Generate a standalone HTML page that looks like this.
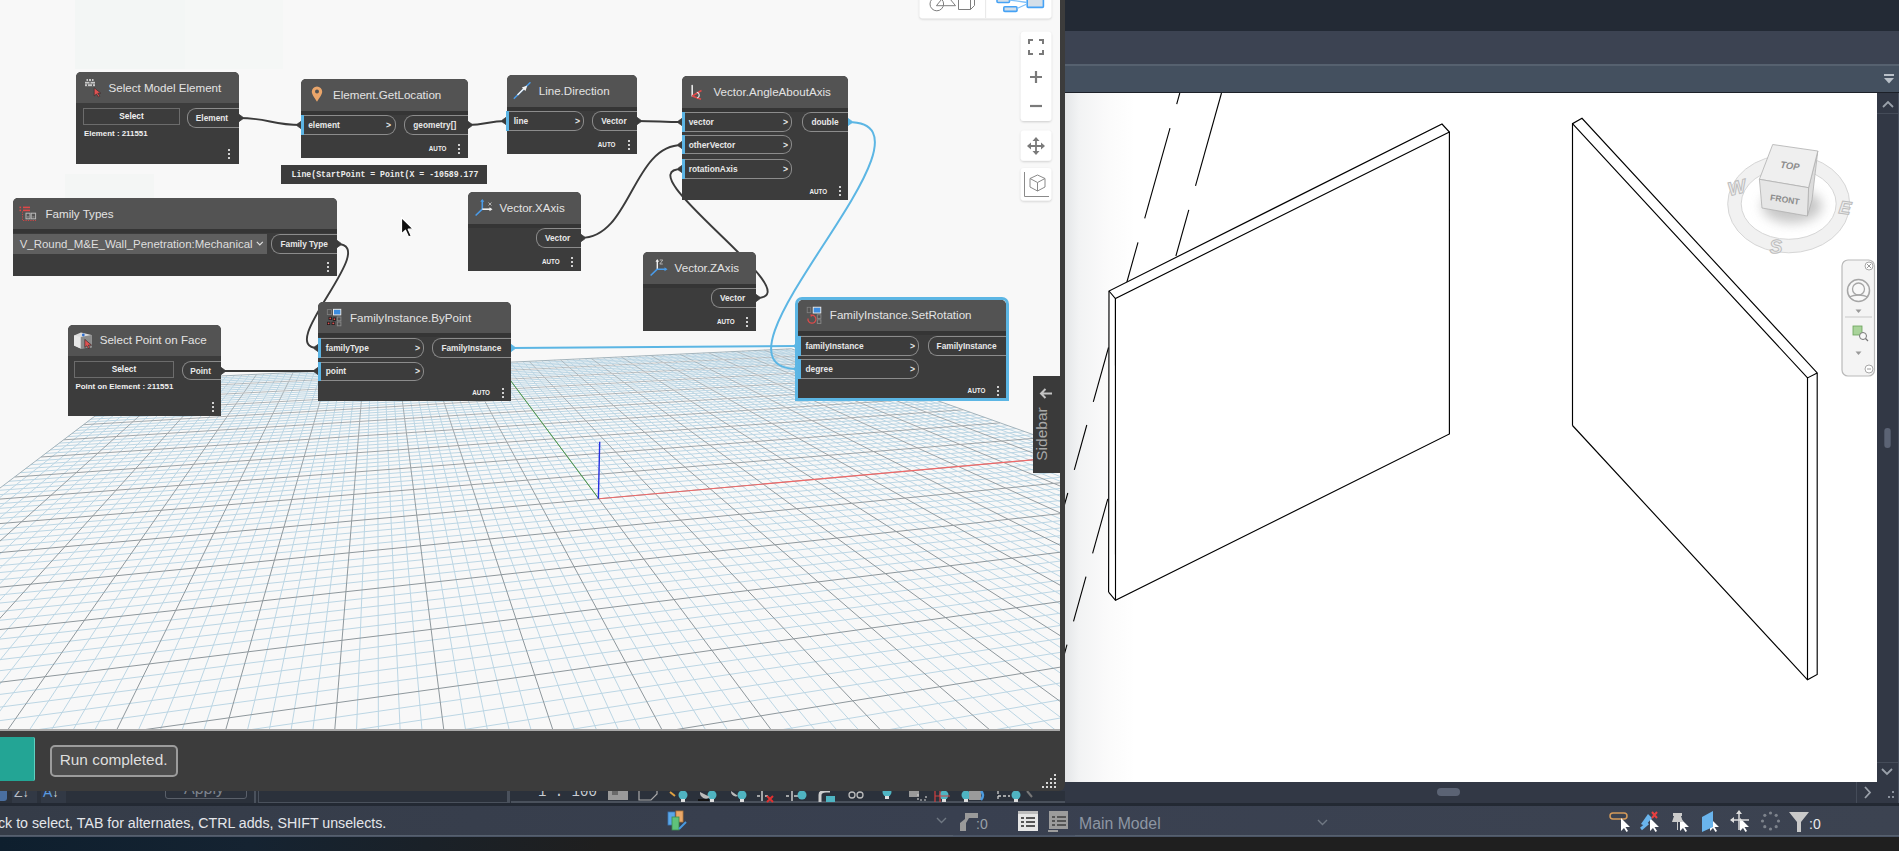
<!DOCTYPE html><html><head><meta charset="utf-8"><style>
*{box-sizing:border-box;margin:0;padding:0}
html,body{width:1899px;height:851px;overflow:hidden;background:#1e1e1e;font-family:"Liberation Sans", sans-serif}
.abs{position:absolute}
</style></head><body>

<div class="abs" style="left:1065px;top:0;width:834px;height:31px;background:#232a35"></div>
<div class="abs" style="left:1065px;top:31px;width:834px;height:33px;background:#3c4352"></div>
<div class="abs" style="left:1065px;top:64px;width:834px;height:28px;background:#44505f;border-top:2px solid #56616f"></div>
<div class="abs" style="left:1065px;top:92px;width:834px;height:1px;background:#1c2028"></div>
<div class="abs" style="left:1876px;top:93px;width:23px;height:689px;background:#323845"></div>
<div class="abs" style="left:0;top:782px;width:1899px;height:21px;background:#323845"></div>
<div class="abs" style="left:0;top:803px;width:1899px;height:3px;background:#232933"></div>
<div class="abs" style="left:0;top:806px;width:1899px;height:30px;background:linear-gradient(90deg,#353c48,#394050 50%,#3c4351)"></div>
<div class="abs" style="left:0;top:835px;width:1899px;height:2px;background:#4b5566"></div>
<div class="abs" style="left:0;top:837px;width:1899px;height:14px;background:#1f1f1f"></div>
<div class="abs" style="left:1065px;top:93px;width:812px;height:689px;background:linear-gradient(90deg,#e4e6e8 0px,#f2f3f4 14px,#fafafa 40px,#fff 70px)"></div><svg class="abs" style="left:0;top:0" width="1899" height="851"><path d="M1179.8 93L1176.7 104.1" stroke="#000" stroke-width="1.1" fill="none"/><path d="M1170.0 128.1L1144.7 218.4" stroke="#000" stroke-width="1.1" fill="none"/><path d="M1138.0 242.3L1126.9 282" stroke="#000" stroke-width="1.1" fill="none"/><path d="M1108.5 347.5L1093.3 401.8" stroke="#000" stroke-width="1.1" fill="none"/><path d="M1086.8 425L1074.3 469.8" stroke="#000" stroke-width="1.1" fill="none"/><path d="M1067.8 493L1063.0 510" stroke="#000" stroke-width="1.1" fill="none"/><path d="M1221.5 93L1195.5 185.9" stroke="#000" stroke-width="1.1" fill="none"/><path d="M1188.8 209.9L1175.9 256" stroke="#000" stroke-width="1.1" fill="none"/><path d="M1107.8 498.9L1092.6 553.3" stroke="#000" stroke-width="1.1" fill="none"/><path d="M1086.0 576.6L1073.5 621.3" stroke="#000" stroke-width="1.1" fill="none"/><path d="M1067.0 644.6L1061.3 665" stroke="#000" stroke-width="1.1" fill="none"/><polygon points="1109,291 1442,124 1449.4,132 1449.4,434 1115.5,600.3 1108.6,592.1" fill="#fff" stroke="none"/><polyline points="1108.6,592.1 1109,291 1442,124 1449.4,132 1449.4,434 1115.5,600.3 1108.6,592.1" stroke="#000" stroke-width="1.15" fill="none"/><polyline points="1109,291 1115.4,298.5 1449.4,132" stroke="#000" stroke-width="1.15" fill="none"/><polyline points="1115.4,298.5 1115.5,600.3" stroke="#000" stroke-width="1.15" fill="none"/><polyline points="1572.5,425.5 1572.5,123.7 1582,118.3 1817.2,372.9 1817.2,674.4 1807.5,679.8 1572.5,425.5" stroke="#000" stroke-width="1.15" fill="none"/><polyline points="1572.5,123.7 1807.5,377.9 1817.2,372.9" stroke="#000" stroke-width="1.15" fill="none"/><polyline points="1807.5,377.9 1807.5,679.8" stroke="#000" stroke-width="1.15" fill="none"/></svg>
<svg class="abs" style="left:0;top:0" width="1899" height="851"><defs><filter id="blr" x="-50%" y="-50%" width="200%" height="200%"><feGaussianBlur stdDeviation="6"/></filter></defs><path fill-rule="evenodd" d="M1727.7 203.8A61 49 0 1 0 1849.7 203.8A61 49 0 1 0 1727.7 203.8ZM1741.2 203.8A47.5 35.5 0 1 0 1836.2 203.8A47.5 35.5 0 1 0 1741.2 203.8Z" fill="#f1f1f1" stroke="#d6d6d6" stroke-width="1"/><ellipse cx="1792" cy="206" rx="30" ry="17" fill="#9a9a9a" opacity="0.55" filter="url(#blr)"/><polygon points="1817.8,151 1808.6,187.7 1807.4,216 1812,200" fill="#dcdcdc" stroke="#b0b0b0" stroke-width="0.8"/><polygon points="1772.7,144.5 1817.8,151 1808.6,187.7 1759.4,179.3" fill="#efefef" stroke="#b0b0b0" stroke-width="0.8"/><polygon points="1759.4,179.3 1808.6,187.7 1807.4,216 1762,208" fill="#e6e6e6" stroke="#b0b0b0" stroke-width="0.8"/><text x="1790" y="169" font-size="9.5" text-anchor="middle" fill="#8c8c8c" style="font-family:'Liberation Sans';font-weight:bold;font-style:italic" transform="rotate(7 1790 165)">TOP</text><text x="1785" y="202.5" font-size="8.6" text-anchor="middle" fill="#8c8c8c" style="font-family:'Liberation Sans';font-weight:bold" transform="rotate(9 1785 199)">FRONT</text><text x="1737" y="194" font-size="19" text-anchor="middle" fill="#eeeeee" stroke="#bdbdbd" stroke-width="1" style="font-family:'Liberation Sans';font-weight:bold;font-style:italic" transform="rotate(-14 1737 188)">W</text><text x="1845" y="214" font-size="18" text-anchor="middle" fill="#eeeeee" stroke="#bdbdbd" stroke-width="1" style="font-family:'Liberation Sans';font-weight:bold;font-style:italic" transform="rotate(8 1845 208)">E</text><text x="1776" y="253" font-size="19" text-anchor="middle" fill="#eeeeee" stroke="#bdbdbd" stroke-width="1" style="font-family:'Liberation Sans';font-weight:bold;font-style:italic" transform="rotate(-4 1776 247)">S</text><rect x="1842" y="260" width="32.5" height="116" rx="6" fill="#f4f4f4" stroke="#b9b9b9" stroke-width="1.2"/><circle cx="1869" cy="266" r="4" fill="#fff" stroke="#a8a8a8" stroke-width="1"/><path d="M1867 264L1871 268M1871 264L1867 268" stroke="#999" stroke-width="1"/><circle cx="1858.5" cy="290.5" r="11" fill="#f8f8f8" stroke="#a6a6a6" stroke-width="1.5"/><circle cx="1858.5" cy="289" r="6" fill="none" stroke="#a6a6a6" stroke-width="1.3"/><path d="M1849 297Q1858.5 293 1868 297" stroke="#a6a6a6" stroke-width="1.3" fill="none"/><path d="M1855.5 309.5L1861.5 309.5L1858.5 313Z" fill="#9a9a9a"/><path d="M1845 317H1872" stroke="#c8c8c8" stroke-width="1"/><rect x="1853" y="326" width="9" height="9" fill="#a9d39a" stroke="#6aa35a" stroke-width="0.8"/><circle cx="1863" cy="336" r="3.5" fill="#f8f8f8" stroke="#777" stroke-width="1"/><path d="M1865.5 338.5L1868 341" stroke="#777" stroke-width="1.3"/><path d="M1855.5 351.5L1861.5 351.5L1858.5 355Z" fill="#9a9a9a"/><circle cx="1869" cy="369" r="4" fill="#fff" stroke="#a8a8a8" stroke-width="1"/><path d="M1867 369H1871" stroke="#999" stroke-width="1"/></svg>
<svg class="abs" style="left:0;top:0" width="1899" height="851"><rect x="1884" y="74" width="10" height="2" fill="#b9c0c8"/><path d="M1884 78H1894L1889 83.5Z" fill="#b9c0c8"/><path d="M1883 107L1888 102L1893 107" stroke="#9aa1aa" stroke-width="1.8" fill="none"/><rect x="1877" y="113" width="21" height="1" fill="#454c59"/><rect x="1884.3" y="428" width="6.4" height="20" rx="3" fill="#5b6374"/><rect x="1877" y="762" width="21" height="1" fill="#454c59"/><path d="M1882 769L1887 774L1892 769" stroke="#9aa1aa" stroke-width="1.8" fill="none"/><rect x="1898" y="93" width="1" height="710" fill="#4a5260"/><rect x="1437" y="788" width="23" height="8" rx="4" fill="#5b6374"/><rect x="1856" y="782" width="1" height="21" fill="#454c59"/><path d="M1865 787L1870 792.5L1865 798" stroke="#9aa1aa" stroke-width="1.8" fill="none"/><rect x="1892" y="791" width="2" height="2" fill="#8a919c"/><rect x="1888" y="796" width="2" height="2" fill="#8a919c"/><rect x="1892" y="796" width="2" height="2" fill="#8a919c"/></svg>
<div class="abs" style="left:0;top:791px;width:1065px;height:12px;background:#2b313b"></div><div class="abs" style="left:0;top:791px;width:7px;height:10px;background:#4a6fa0;border-radius:0 0 3px 0"></div><div class="abs" style="left:12px;top:791px;width:25px;height:12px;background:#323945"></div><div class="abs" style="left:41px;top:791px;width:25px;height:12px;background:#323945"></div><div class="abs" style="left:14px;top:785px;font-size:14px;line-height:1;color:#b9bec6">Z<span style="font-size:12px;font-weight:bold;color:#ddd">&#8595;</span></div><div class="abs" style="left:43px;top:785px;font-size:14px;line-height:1;color:#5a9ae0">A<span style="font-size:12px;font-weight:bold;color:#ddd">&#8595;</span></div><div class="abs" style="left:165px;top:780px;width:82px;height:19px;border:1px solid #5a606a;border-radius:3px"></div><div class="abs" style="left:184px;top:780.5px;font-size:16px;line-height:1;color:#7d838c">Apply</div><div class="abs" style="left:254px;top:791px;width:2px;height:12px;background:#4a515c"></div><div class="abs" style="left:258px;top:791px;width:250px;height:12px;border:1px solid #4a515c;border-top:none"></div><div class="abs" style="left:507px;top:791px;width:3px;height:12px;background:#4a515c"></div><div class="abs" style="left:511px;top:791px;width:554px;height:12px;border-bottom:2px solid #4a515c"></div><div class="abs" style="left:538px;top:784.7px;font-size:14px;line-height:1;color:#c9cdd3;font-family:'Liberation Mono',monospace">1 : 100</div><svg class="abs" style="left:0;top:0" width="1899" height="851"><rect x="608" y="791" width="20" height="9" fill="#9a9a9a"/><rect x="612" y="791" width="6" height="4" fill="#6a6a6a"/><path d="M639 791V800H651L657 794V791" stroke="#aaa" stroke-width="1.2" fill="none"/><circle cx="683" cy="795" r="4.5" fill="#4fb4c2"/><rect x="681" y="799" width="4" height="3" fill="#ddd"/><circle cx="712" cy="795" r="4.5" fill="#4fb4c2"/><rect x="710" y="799" width="4" height="3" fill="#ddd"/><circle cx="742" cy="795" r="4.5" fill="#4fb4c2"/><rect x="740" y="799" width="4" height="3" fill="#ddd"/><circle cx="944" cy="795" r="4.5" fill="#4fb4c2"/><rect x="942" y="799" width="4" height="3" fill="#ddd"/><circle cx="966" cy="795" r="4.5" fill="#4fb4c2"/><rect x="964" y="799" width="4" height="3" fill="#ddd"/><circle cx="1016" cy="795" r="4.5" fill="#4fb4c2"/><rect x="1014" y="799" width="4" height="3" fill="#ddd"/><path d="M670 792L675 796" stroke="#e0a040" stroke-width="2"/><path d="M700 792A6 6 0 0 0 710 797" fill="#bbb"/><rect x="698" y="799" width="11" height="2" fill="#111"/><path d="M731 791A5 5 0 0 0 738 796" fill="#bbb"/><path d="M762 791V801M757 796H760M765 796H768" stroke="#ccc" stroke-width="1.5"/><path d="M767 796L773 802M773 796L767 802" stroke="#e03030" stroke-width="2"/><path d="M792 791V801M786 796H789M794 796H798" stroke="#ccc" stroke-width="1.5"/><circle cx="802" cy="795" r="4.5" fill="#4fb4c2"/><path d="M820 802V795Q820 791 826 791H830" stroke="#ccc" stroke-width="3" fill="none"/><rect x="826" y="796" width="9" height="6" fill="#4fb4c2"/><circle cx="852" cy="795" r="3" stroke="#bbb" stroke-width="1.3" fill="none"/><circle cx="860" cy="795" r="3" stroke="#bbb" stroke-width="1.3" fill="none"/><circle cx="887" cy="792" r="4.5" fill="#4fb4c2"/><rect x="885" y="796" width="4" height="3" fill="#ddd"/><rect x="909" y="791" width="10" height="6" fill="#9a9a9a"/><path d="M918 794V800H926V794" stroke="#ccc" stroke-width="1.2" fill="none" stroke-dasharray="2 2"/><path d="M935 791V802M940 791V802M935 796H950" stroke="#d04040" stroke-width="1.2"/><rect x="969" y="791" width="12" height="9" fill="#9a9a9a"/><path d="M981 791Q985 795 981 800" stroke="#4a9ae0" stroke-width="2.5" fill="none"/><path d="M998 791V800M998 796H1010" stroke="#ccc" stroke-width="1.3" stroke-dasharray="3 2"/><path d="M1027 791L1032 797" stroke="#777" stroke-width="2"/></svg><div class="abs" style="left:-2px;top:815.5px;font-size:14.22px;line-height:1;color:#e4e6ea;white-space:nowrap">ck to select, TAB for alternates, CTRL adds, SHIFT unselects.</div><svg class="abs" style="left:0;top:0" width="1899" height="851"><rect x="668" y="812" width="7" height="13" fill="#5aa7e8" stroke="#3a78b8" stroke-width="0.8"/><rect x="676" y="811" width="7" height="11" fill="#e9a86a" stroke="#b87838" stroke-width="0.8"/><rect x="672" y="817" width="7" height="13" fill="#5fc27a" stroke="#3a8a50" stroke-width="0.8"/><path d="M679 829L686 822" stroke="#4a9ae0" stroke-width="2"/><path d="M937 818L941.5 822.5L946 818" stroke="#6f7782" stroke-width="1.4" fill="none"/><path d="M960 831V823L965 819V813H978V818H969L966 823V831Z" fill="#9a9a9a"/><rect x="1018" y="811" width="20" height="20" fill="#e6e6e6"/><rect x="1018" y="811" width="20" height="3" fill="#bdbdbd"/><g fill="#555"><rect x="1021" y="817" width="3" height="2"/><rect x="1026" y="817" width="9" height="2"/><rect x="1021" y="821" width="3" height="2"/><rect x="1026" y="821" width="9" height="2"/><rect x="1021" y="825" width="3" height="2"/><rect x="1026" y="825" width="9" height="2"/></g><rect x="1049" y="811" width="19" height="18" fill="#9c9c9c"/><g fill="#555"><rect x="1052" y="816" width="3" height="2"/><rect x="1057" y="816" width="9" height="2"/><rect x="1052" y="820" width="3" height="2"/><rect x="1057" y="820" width="9" height="2"/><rect x="1052" y="824" width="3" height="2"/><rect x="1057" y="824" width="9" height="2"/></g><path d="M1048 831H1058" stroke="#9c9c9c" stroke-width="2"/><rect x="0" y="835" width="953" height="1" fill="#56606e"/><rect x="1075" y="835" width="824" height="1" fill="#56606e"/><path d="M1318 820L1322.5 824.5L1327 820" stroke="#6f7782" stroke-width="1.4" fill="none"/><path d="M1613 813H1624A3 3 0 0 1 1624 819H1613A3 3 0 0 1 1613 813Z" stroke="#d49a5a" stroke-width="1.5" fill="none"/><path d="M1621 818V831L1624 828L1626.5 832L1628 831L1625.5 827H1630Z" fill="#fff"/><path d="M1650 818V831L1653 828L1655.5 832L1657 831L1654.5 827H1659Z" fill="#fff"/><path d="M1680 818V831L1683 828L1685.5 832L1687 831L1684.5 827H1689Z" fill="#fff"/><path d="M1710 818V831L1713 828L1715.5 832L1717 831L1714.5 827H1719Z" fill="#fff"/><path d="M1740 818V831L1743 828L1745.5 832L1747 831L1744.5 827H1749Z" fill="#fff"/><path d="M1641 824L1648 814L1652 818L1645 826Z" fill="#6ab4ec"/><path d="M1641 829L1648 823" stroke="#6ab4ec" stroke-width="3"/><path d="M1652 812L1657 818M1657 812L1652 818" stroke="#e84040" stroke-width="2"/><rect x="1673" y="813" width="9" height="3" fill="#ccc"/><path d="M1674 816H1681L1683 822H1672Z" fill="#ccc"/><path d="M1677.5 822V830" stroke="#ccc" stroke-width="1"/><path d="M1702 817L1713 811V827L1702 832Z" fill="#6ab4ec"/><path d="M1739 811V830M1731 820H1749" stroke="#ddd" stroke-width="1.5"/><path d="M1739 810L1742 814H1736Z M1730 820L1734 817V823Z" fill="#ddd"/><circle cx="1778.5" cy="821.0" r="1.6" fill="#7d838c"/><circle cx="1776.2" cy="826.7" r="1.6" fill="#7d838c"/><circle cx="1770.5" cy="829.0" r="1.6" fill="#7d838c"/><circle cx="1764.8" cy="826.7" r="1.6" fill="#7d838c"/><circle cx="1762.5" cy="821.0" r="1.6" fill="#7d838c"/><circle cx="1764.8" cy="815.3" r="1.6" fill="#7d838c"/><circle cx="1770.5" cy="813.0" r="1.6" fill="#7d838c"/><circle cx="1776.2" cy="815.3" r="1.6" fill="#7d838c"/><path d="M1789 812H1809L1801 822V832H1797V822Z" fill="#c9c9c9"/></svg><div class="abs" style="left:1809px;top:816.5px;font-size:14px;line-height:1;color:#e8eaee">:0</div><div class="abs" style="left:976px;top:816.5px;font-size:14px;line-height:1;color:#9aa0a8">:0</div><div class="abs" style="left:1079px;top:815.5px;font-size:15.8px;line-height:1;color:#8d96a3;white-space:nowrap">Main Model</div><div class="abs" style="left:0;top:837px;width:1899px;height:14px;background:linear-gradient(90deg,#0e1f2e 0px,#152331 250px,#1f1f1f 600px,#1f1f1f 100%)"></div>
<div class="abs" style="left:0;top:0;width:1065px;height:791px;background:#3c3c3c;border-bottom-right-radius:6px"></div>
<div class="abs" style="left:0;top:0;width:1060px;height:730px;background:#f8f8f8;overflow:hidden" id="canvas">
<div class="abs" style="left:74.7px;top:0;width:110px;height:69px;background:#f3f6f5"></div><div class="abs" style="left:184.7px;top:0;width:98px;height:69px;background:#f5f7f6"></div><div class="abs" style="left:65.3px;top:174.4px;width:88.4px;height:24px;background:#f4f6f5"></div>
<svg class="abs" style="left:0;top:0" width="1060" height="730"><defs><linearGradient id="gfade" x1="0" y1="0" x2="0" y2="1" gradientUnits="objectBoundingBox"><stop offset="0" stop-color="#fff" stop-opacity="0.45"/><stop offset="0.5" stop-color="#fff" stop-opacity="0.85"/><stop offset="1" stop-color="#fff" stop-opacity="1"/></linearGradient><mask id="gmask" maskUnits="userSpaceOnUse" x="0" y="0" width="1060" height="730"><rect x="0" y="340" width="1060" height="200" fill="url(#gfade)"/><rect x="0" y="540" width="1060" height="190" fill="#fff"/></mask></defs><path d="M-2067.4 2115.5L150.7 379.4M-1937.1 2074.0L158.5 379.0M-1812.4 2034.2L166.2 378.6M-1692.9 1996.0L173.9 378.3M-1468.1 1924.3L189.3 377.5M-1362.3 1890.6L196.9 377.2M-1260.5 1858.1L204.5 376.8M-1162.6 1826.9L212.0 376.4M-977.4 1767.8L227.0 375.7M-1945.3 1963.1L2004.6 779.3M-889.8 1739.9L234.5 375.4M-1734.0 1802.9L1952.8 760.9M-805.2 1712.9L241.9 375.0M-1557.9 1669.4L1904.1 743.6M-723.6 1686.9L249.3 374.7M-1409.0 1556.4L1858.4 727.4M-568.4 1637.4L264.0 374.0M-1170.7 1375.8L1774.6 697.7M-494.6 1613.8L271.4 373.6M-1073.9 1302.4L1736.2 684.1M-423.2 1591.1L278.6 373.3M-988.5 1237.6L1699.8 671.2M-354.1 1569.0L285.9 372.9M-912.6 1180.0L1665.4 658.9M-222.2 1526.9L300.3 372.2M-783.5 1082.2L1601.6 636.3M-159.2 1506.8L307.5 371.9M-728.2 1040.3L1572.0 625.8M-98.1 1487.4L314.6 371.6M-677.9 1002.1L1543.8 615.8M-38.8 1468.4L321.8 371.2M-632.0 967.3L1516.9 606.2M74.7 1432.2L335.9 370.5M-551.3 906.1L1466.6 588.4M129.1 1414.9L342.9 370.2M-515.5 879.0L1443.2 580.1M181.9 1398.0L349.9 369.9M-482.5 853.9L1420.7 572.1M233.3 1381.6L356.9 369.5M-451.7 830.6L1399.1 564.5M332.0 1350.1L370.8 368.9M-396.5 788.7L1358.5 550.1M379.5 1335.0L377.7 368.6M-371.5 769.8L1339.4 543.3M425.6 1320.3L384.5 368.2M-348.1 752.0L1321.0 536.8M470.6 1305.9L391.4 367.9M-326.1 735.4L1303.4 530.5M557.3 1278.3L405.0 367.3M-285.9 704.9L1269.9 518.6M599.0 1265.0L411.8 366.9M-267.5 690.9L1254.1 513.0M639.7 1252.0L418.5 366.6M-250.0 677.7L1238.8 507.6M679.4 1239.3L425.2 366.3M-233.5 665.2L1224.0 502.4M756.0 1214.9L438.6 365.7M-203.0 642.0L1196.0 492.4M793.0 1203.1L445.2 365.3M-188.8 631.3L1182.7 487.7M829.2 1191.6L451.8 365.0M-175.3 621.0L1169.7 483.1M864.5 1180.3L458.4 364.7M-162.5 611.3L1157.2 478.7M932.8 1158.5L471.5 364.1M-138.5 593.1L1133.4 470.2M965.8 1148.0L478.0 363.8M-127.3 584.6L1122.0 466.1M998.1 1137.7L484.5 363.5M-116.5 576.5L1110.9 462.2M1029.7 1127.6L491.0 363.2M-106.2 568.6L1100.2 458.4M1090.9 1108.1L503.8 362.5M-86.9 554.0L1079.7 451.1M1120.6 1098.6L510.2 362.2M-77.8 547.1L1069.8 447.6M1149.6 1089.4L516.6 361.9M-69.0 540.4L1060.3 444.2M1178.1 1080.3L522.9 361.6M-60.6 534.1L1050.9 440.9M1233.3 1062.7L535.5 361.0M-44.7 522.0L1033.1 434.6M1260.0 1054.1L541.8 360.7M-37.1 516.3L1024.5 431.6M1286.3 1045.8L548.1 360.4M-29.9 510.7L1016.1 428.6M1312.0 1037.6L554.3 360.1M-22.8 505.4L1008.0 425.7M1362.1 1021.6L566.7 359.6M-9.5 495.3L992.3 420.1M1386.4 1013.8L572.9 359.3M-3.2 490.5L984.7 417.4M1410.2 1006.2L579.0 359.0M3.0 485.8L977.3 414.8M1433.6 998.8L585.1 358.7M8.9 481.3L970.2 412.3M1479.2 984.2L597.3 358.1M20.3 472.7L956.3 407.3M1501.3 977.2L603.3 357.8M25.7 468.6L949.6 405.0M1523.1 970.2L609.4 357.5M30.9 464.7L943.0 402.6M1544.5 963.4L615.4 357.2M36.0 460.8L936.6 400.4M1586.1 950.1L627.3 356.7M45.8 453.4L924.2 396.0M1606.4 943.7L633.2 356.4M50.4 449.9L918.3 393.9M1626.3 937.3L639.2 356.1M55.0 446.4L912.4 391.8M1645.9 931.0L645.1 355.8M59.4 443.1L906.7 389.8M1684.2 918.9L656.8 355.3M67.9 436.6L895.6 385.8M1702.8 912.9L662.6 355.0M72.0 433.5L890.2 383.9M1721.1 907.1L668.5 354.7M75.9 430.5L884.9 382.0M1739.2 901.3L674.2 354.4M79.8 427.6L879.8 380.2M1774.4 890.1L685.8 353.9M87.2 422.0L869.8 376.7M1791.5 884.6L691.5 353.6M90.8 419.2L864.9 374.9M1808.5 879.2L697.2 353.3M94.3 416.6L860.1 373.2M1825.1 873.9L702.9 353.1M97.7 414.0L855.5 371.6M1857.6 863.5L714.2 352.5M104.3 409.0L846.4 368.4M1873.5 858.5L719.9 352.3M107.5 406.6L842.0 366.8M1889.2 853.5L725.5 352.0M110.6 404.3L837.7 365.3M1904.6 848.5L731.1 351.7M113.6 402.0L833.4 363.8M1934.7 838.9L742.2 351.2M119.5 397.5L825.1 360.8M1949.5 834.2L747.8 350.9M122.3 395.4L821.1 359.4M1964.0 829.6L753.3 350.7M125.1 393.3L817.2 358.0M1978.3 825.0L758.8 350.4M127.8 391.2L813.3 356.6M2006.3 816.1L769.7 349.9M133.0 387.2L805.7 353.9M2020.1 811.7L775.2 349.6M135.6 385.3L802.1 352.6M2033.6 807.4L780.6 349.4M138.1 383.4L798.4 351.4M2046.9 803.1L786.0 349.1M140.5 381.6L794.9 350.1" stroke="#bcd6e4" stroke-width="1" fill="none"/><path d="M-1578.2 1959.5L181.6 377.9M-1068.3 1796.8L219.5 376.1M-2203.6 2158.9L2060.1 799.0M-644.7 1661.7L256.7 374.3M-1281.3 1459.6L1815.3 712.1M-287.1 1547.6L293.1 372.6M-844.6 1128.5L1632.7 647.3M18.8 1450.1L328.8 370.9M-590.0 935.4L1491.2 597.1M283.4 1365.7L363.9 369.2M-423.1 809.0L1378.4 557.1M514.5 1291.9L398.2 367.6M-305.4 719.7L1286.3 524.5M718.2 1227.0L431.9 366.0M-217.8 653.3L1209.8 497.3M899.0 1169.3L465.0 364.4M-150.2 602.0L1145.1 474.4M1060.6 1117.7L497.4 362.9M-96.4 561.2L1089.8 454.7M1205.9 1071.4L529.2 361.3M-52.5 527.9L1041.9 437.7M1337.3 1029.5L560.5 359.8M-16.1 500.3L1000.0 422.9M1456.6 991.4L591.2 358.4M14.7 477.0L963.1 409.8M1565.5 956.7L621.3 356.9M41.0 457.0L930.4 398.2M1665.2 924.9L650.9 355.5M63.7 439.8L901.1 387.8M1756.9 895.7L680.0 354.2M83.6 424.7L874.7 378.4M1841.5 868.7L708.6 352.8M101.0 411.5L850.9 370.0M1919.8 843.7L736.7 351.5M116.6 399.7L829.2 362.3M1992.4 820.5L764.3 350.1M130.4 389.2L809.5 355.3" stroke="#8e979c" stroke-width="1" fill="none" mask="url(#gmask)"/><path d="M-2203.6 2158.9L142.9 379.7M2060.1 799.0L791.4 348.8M142.9 379.7L791.4 348.8" stroke="#a3b3bb" stroke-width="1" fill="none"/><path d="M598.8 498.8L1089.8 454.7" stroke="#f06868" stroke-width="1.1" fill="none"/><path d="M598.8 498.8L497.4 362.9" stroke="#4a9a4a" stroke-width="1" fill="none"/><path d="M598.4 498.8L599.7 441.7" stroke="#2630e0" stroke-width="1.4" fill="none"/></svg>
<svg class="abs" style="left:0;top:0" width="1060" height="730"><path d="M239 118C269 118 271 125 301 125" stroke="#3b3b3b" stroke-width="1.9" fill="none"/><path d="M239 114.4L242.8 117.1V118.9L239 121.6Z" fill="#3b3b3b" stroke="#3b3b3b" stroke-width="0.8" stroke-linejoin="round"/><path d="M301 121.4L297.2 124.1V125.9L301 128.6Z" fill="#3b3b3b" stroke="#3b3b3b" stroke-width="0.8" stroke-linejoin="round"/><path d="M468 125C486 125 488 121 506 121" stroke="#3b3b3b" stroke-width="1.9" fill="none"/><path d="M468 121.4L471.8 124.1V125.9L468 128.6Z" fill="#3b3b3b" stroke="#3b3b3b" stroke-width="0.8" stroke-linejoin="round"/><path d="M506 117.4L502.2 120.1V121.9L506 124.6Z" fill="#3b3b3b" stroke="#3b3b3b" stroke-width="0.8" stroke-linejoin="round"/><path d="M637 121C657 121 662 122 682 122" stroke="#3b3b3b" stroke-width="1.9" fill="none"/><path d="M637 117.4L640.8 120.1V121.9L637 124.6Z" fill="#3b3b3b" stroke="#3b3b3b" stroke-width="0.8" stroke-linejoin="round"/><path d="M682 118.4L678.2 121.1V122.9L682 125.6Z" fill="#3b3b3b" stroke="#3b3b3b" stroke-width="0.8" stroke-linejoin="round"/><path d="M581 238C631 238 632 145 682 145" stroke="#3b3b3b" stroke-width="1.9" fill="none"/><path d="M581 234.4L584.8 237.1V238.9L581 241.6Z" fill="#3b3b3b" stroke="#3b3b3b" stroke-width="0.8" stroke-linejoin="round"/><path d="M682 141.4L678.2 144.1V145.9L682 148.6Z" fill="#3b3b3b" stroke="#3b3b3b" stroke-width="0.8" stroke-linejoin="round"/><path d="M756 298C816 298 622 169 682 169" stroke="#3b3b3b" stroke-width="1.9" fill="none"/><path d="M756 294.4L759.8 297.1V298.9L756 301.6Z" fill="#3b3b3b" stroke="#3b3b3b" stroke-width="0.8" stroke-linejoin="round"/><path d="M682 165.4L678.2 168.1V169.9L682 172.6Z" fill="#3b3b3b" stroke="#3b3b3b" stroke-width="0.8" stroke-linejoin="round"/><path d="M337 244C382 244 273 348 318 348" stroke="#3b3b3b" stroke-width="1.9" fill="none"/><path d="M337 240.4L340.8 243.1V244.9L337 247.6Z" fill="#3b3b3b" stroke="#3b3b3b" stroke-width="0.8" stroke-linejoin="round"/><path d="M318 344.4L314.2 347.1V348.9L318 351.6Z" fill="#3b3b3b" stroke="#3b3b3b" stroke-width="0.8" stroke-linejoin="round"/><path d="M221 371C251 371 288 371 318 371" stroke="#3b3b3b" stroke-width="1.9" fill="none"/><path d="M221 367.4L224.8 370.1V371.9L221 374.6Z" fill="#3b3b3b" stroke="#3b3b3b" stroke-width="0.8" stroke-linejoin="round"/><path d="M318 367.4L314.2 370.1V371.9L318 374.6Z" fill="#3b3b3b" stroke="#3b3b3b" stroke-width="0.8" stroke-linejoin="round"/><path d="M511 348C571 348 738 346 798 346" stroke="#5cb6e4" stroke-width="2.0" fill="none"/><path d="M511 344.4L514.8 347.1V348.9L511 351.6Z" fill="#5cb6e4" stroke="#5cb6e4" stroke-width="0.8" stroke-linejoin="round"/><path d="M798 342.4L794.2 345.1V346.9L798 349.6Z" fill="#5cb6e4" stroke="#5cb6e4" stroke-width="0.8" stroke-linejoin="round"/><path d="M848 122C958 122 688 369 798 369" stroke="#5cb6e4" stroke-width="2.0" fill="none"/><path d="M848 118.4L851.8 121.1V122.9L848 125.6Z" fill="#5cb6e4" stroke="#5cb6e4" stroke-width="0.8" stroke-linejoin="round"/><path d="M798 365.4L794.2 368.1V369.9L798 372.6Z" fill="#5cb6e4" stroke="#5cb6e4" stroke-width="0.8" stroke-linejoin="round"/></svg>
<div class="abs" style="left:76.0px;top:72.0px;width:163.0px;height:92.0px;background:#3c3c3c;border-radius:5px 5px 0 0"></div><div class="abs" style="left:76.0px;top:72.0px;width:163.0px;height:31.0px;background:#535353;border-radius:5px 5px 0 0"></div><div class="abs" style="left:108.5px;top:82.18px;font-size:11.6px;line-height:1;font-weight:normal;color:#e3e3e3;white-space:nowrap;">Select Model Element</div><div class="abs" style="left:83.0px;top:108.0px;width:97.0px;height:17.0px;border:1px solid #6c6c6c"></div><div class="abs" style="left:83px;top:108px;width:97px;height:17px;font-size:8.3px;line-height:17px;text-align:center;font-weight:bold;color:#f2f2f2">Select</div><div class="abs" style="left:187.0px;top:108.0px;width:52.0px;height:20.0px;border:1px solid #8c8c8c;border-right:none;border-radius:9px 0 0 9px"></div><div class="abs" style="left:195.8px;top:114.07px;font-size:8.3px;line-height:1;font-weight:bold;color:#e8e8e8;white-space:nowrap;">Element</div><div class="abs" style="left:84.0px;top:130.31px;font-size:7.9px;line-height:1;font-weight:bold;color:#f0f0f0;white-space:nowrap;">Element : 211551</div><div class="abs" style="left:228.0px;top:149.0px;width:2.0px;height:2.0px;background:#d0d0d0"></div><div class="abs" style="left:228.0px;top:153.0px;width:2.0px;height:2.0px;background:#d0d0d0"></div><div class="abs" style="left:228.0px;top:157.0px;width:2.0px;height:2.0px;background:#d0d0d0"></div><div class="abs" style="left:301.0px;top:79.0px;width:167.0px;height:79.0px;background:#3c3c3c;border-radius:5px 5px 0 0"></div><div class="abs" style="left:301.0px;top:79.0px;width:167.0px;height:32.0px;background:#535353;border-radius:5px 5px 0 0"></div><div class="abs" style="left:301.0px;top:111.0px;width:167.0px;height:4.0px;background:#353535"></div><div class="abs" style="left:333.0px;top:89.18px;font-size:11.6px;line-height:1;font-weight:normal;color:#e3e3e3;white-space:nowrap;">Element.GetLocation</div><div class="abs" style="left:301.0px;top:115.0px;width:95.0px;height:20.0px;border:1px solid #8c8c8c;border-left:none;border-radius:0 9px 9px 0"></div><div class="abs" style="left:301.0px;top:115.0px;width:3.0px;height:20.0px;background:#5bb4e4"></div><div class="abs" style="left:308.2px;top:120.99px;font-size:8.4px;line-height:1;font-weight:bold;color:#e8e8e8;white-space:nowrap;">element</div><div class="abs" style="left:386.0px;top:121.12px;font-size:8.6px;line-height:1;font-weight:bold;color:#e8e8e8;white-space:nowrap;">&gt;</div><div class="abs" style="left:404.0px;top:115.0px;width:64.0px;height:20.0px;border:1px solid #8c8c8c;border-right:none;border-radius:9px 0 0 9px"></div><div class="abs" style="left:413.3px;top:121.07px;font-size:8.3px;line-height:1;font-weight:bold;color:#e8e8e8;white-space:nowrap;">geometry[]</div><div class="abs" style="left:428.8px;top:145.97px;font-size:6.3px;line-height:1;font-weight:bold;color:#f0f0f0;white-space:nowrap;">AUTO</div><div class="abs" style="left:458.0px;top:144.0px;width:2.0px;height:2.0px;background:#d0d0d0"></div><div class="abs" style="left:458.0px;top:148.0px;width:2.0px;height:2.0px;background:#d0d0d0"></div><div class="abs" style="left:458.0px;top:152.0px;width:2.0px;height:2.0px;background:#d0d0d0"></div><div class="abs" style="left:281.0px;top:165.0px;width:206.0px;height:19.0px;background:#3c3c3c"></div><div class="abs" style="left:291.6px;top:171.06px;font-size:8.2px;line-height:1;font-weight:bold;color:#ececec;white-space:nowrap;font-family:'Liberation Mono',monospace;">Line(StartPoint = Point(X = -10589.177</div><div class="abs" style="left:507.0px;top:75.0px;width:130.0px;height:79.0px;background:#3c3c3c;border-radius:5px 5px 0 0"></div><div class="abs" style="left:507.0px;top:75.0px;width:130.0px;height:32.0px;background:#535353;border-radius:5px 5px 0 0"></div><div class="abs" style="left:507.0px;top:107.0px;width:130.0px;height:4.0px;background:#353535"></div><div class="abs" style="left:538.7px;top:85.18px;font-size:11.6px;line-height:1;font-weight:normal;color:#e3e3e3;white-space:nowrap;">Line.Direction</div><div class="abs" style="left:506.0px;top:111.0px;width:78.0px;height:20.0px;border:1px solid #8c8c8c;border-left:none;border-radius:0 9px 9px 0"></div><div class="abs" style="left:506.0px;top:111.0px;width:3.0px;height:20.0px;background:#5bb4e4"></div><div class="abs" style="left:513.8px;top:116.99px;font-size:8.4px;line-height:1;font-weight:bold;color:#e8e8e8;white-space:nowrap;">line</div><div class="abs" style="left:575.0px;top:117.12px;font-size:8.6px;line-height:1;font-weight:bold;color:#e8e8e8;white-space:nowrap;">&gt;</div><div class="abs" style="left:592.0px;top:111.0px;width:45.0px;height:20.0px;border:1px solid #8c8c8c;border-right:none;border-radius:9px 0 0 9px"></div><div class="abs" style="left:601.3px;top:117.07px;font-size:8.3px;line-height:1;font-weight:bold;color:#e8e8e8;white-space:nowrap;">Vector</div><div class="abs" style="left:597.8px;top:141.97px;font-size:6.3px;line-height:1;font-weight:bold;color:#f0f0f0;white-space:nowrap;">AUTO</div><div class="abs" style="left:628.0px;top:140.0px;width:2.0px;height:2.0px;background:#d0d0d0"></div><div class="abs" style="left:628.0px;top:144.0px;width:2.0px;height:2.0px;background:#d0d0d0"></div><div class="abs" style="left:628.0px;top:148.0px;width:2.0px;height:2.0px;background:#d0d0d0"></div><div class="abs" style="left:682.0px;top:76.0px;width:166.0px;height:124.0px;background:#3c3c3c;border-radius:5px 5px 0 0"></div><div class="abs" style="left:682.0px;top:76.0px;width:166.0px;height:32.0px;background:#535353;border-radius:5px 5px 0 0"></div><div class="abs" style="left:682.0px;top:108.0px;width:166.0px;height:4.0px;background:#353535"></div><div class="abs" style="left:713.5px;top:86.18px;font-size:11.6px;line-height:1;font-weight:normal;color:#e3e3e3;white-space:nowrap;">Vector.AngleAboutAxis</div><div class="abs" style="left:682.0px;top:112.4px;width:110.0px;height:19.2px;border:1px solid #8c8c8c;border-left:none;border-radius:0 9px 9px 0"></div><div class="abs" style="left:682.0px;top:112.4px;width:3.0px;height:19.2px;background:#5bb4e4"></div><div class="abs" style="left:688.7px;top:117.99px;font-size:8.4px;line-height:1;font-weight:bold;color:#e8e8e8;white-space:nowrap;">vector</div><div class="abs" style="left:783.0px;top:118.12px;font-size:8.6px;line-height:1;font-weight:bold;color:#e8e8e8;white-space:nowrap;">&gt;</div><div class="abs" style="left:682.0px;top:135.3px;width:110.0px;height:19.2px;border:1px solid #8c8c8c;border-left:none;border-radius:0 9px 9px 0"></div><div class="abs" style="left:682.0px;top:135.3px;width:3.0px;height:19.2px;background:#5bb4e4"></div><div class="abs" style="left:688.7px;top:140.89px;font-size:8.4px;line-height:1;font-weight:bold;color:#e8e8e8;white-space:nowrap;">otherVector</div><div class="abs" style="left:783.0px;top:141.02px;font-size:8.6px;line-height:1;font-weight:bold;color:#e8e8e8;white-space:nowrap;">&gt;</div><div class="abs" style="left:682.0px;top:159.3px;width:110.0px;height:19.4px;border:1px solid #8c8c8c;border-left:none;border-radius:0 9px 9px 0"></div><div class="abs" style="left:682.0px;top:159.3px;width:3.0px;height:19.4px;background:#5bb4e4"></div><div class="abs" style="left:688.7px;top:164.99px;font-size:8.4px;line-height:1;font-weight:bold;color:#e8e8e8;white-space:nowrap;">rotationAxis</div><div class="abs" style="left:783.0px;top:165.12px;font-size:8.6px;line-height:1;font-weight:bold;color:#e8e8e8;white-space:nowrap;">&gt;</div><div class="abs" style="left:802.0px;top:112.4px;width:46.0px;height:19.2px;border:1px solid #8c8c8c;border-right:none;border-radius:9px 0 0 9px"></div><div class="abs" style="left:811.4px;top:118.07px;font-size:8.3px;line-height:1;font-weight:bold;color:#e8e8e8;white-space:nowrap;">double</div><div class="abs" style="left:809.4px;top:189.17px;font-size:6.3px;line-height:1;font-weight:bold;color:#f0f0f0;white-space:nowrap;">AUTO</div><div class="abs" style="left:839.0px;top:186.0px;width:2.0px;height:2.0px;background:#d0d0d0"></div><div class="abs" style="left:839.0px;top:190.0px;width:2.0px;height:2.0px;background:#d0d0d0"></div><div class="abs" style="left:839.0px;top:194.0px;width:2.0px;height:2.0px;background:#d0d0d0"></div><div class="abs" style="left:468.0px;top:192.0px;width:113.0px;height:79.0px;background:#3c3c3c;border-radius:5px 5px 0 0"></div><div class="abs" style="left:468.0px;top:192.0px;width:113.0px;height:32.0px;background:#535353;border-radius:5px 5px 0 0"></div><div class="abs" style="left:468.0px;top:224.0px;width:113.0px;height:4.0px;background:#353535"></div><div class="abs" style="left:499.6px;top:202.18px;font-size:11.6px;line-height:1;font-weight:normal;color:#e3e3e3;white-space:nowrap;">Vector.XAxis</div><div class="abs" style="left:536.0px;top:228.3px;width:45.0px;height:19.4px;border:1px solid #8c8c8c;border-right:none;border-radius:9px 0 0 9px"></div><div class="abs" style="left:544.9px;top:234.07px;font-size:8.3px;line-height:1;font-weight:bold;color:#e8e8e8;white-space:nowrap;">Vector</div><div class="abs" style="left:542.0px;top:258.97px;font-size:6.3px;line-height:1;font-weight:bold;color:#f0f0f0;white-space:nowrap;">AUTO</div><div class="abs" style="left:571.0px;top:257.0px;width:2.0px;height:2.0px;background:#d0d0d0"></div><div class="abs" style="left:571.0px;top:261.0px;width:2.0px;height:2.0px;background:#d0d0d0"></div><div class="abs" style="left:571.0px;top:265.0px;width:2.0px;height:2.0px;background:#d0d0d0"></div><div class="abs" style="left:643.0px;top:252.0px;width:113.0px;height:79.0px;background:#3c3c3c;border-radius:5px 5px 0 0"></div><div class="abs" style="left:643.0px;top:252.0px;width:113.0px;height:32.0px;background:#535353;border-radius:5px 5px 0 0"></div><div class="abs" style="left:643.0px;top:284.0px;width:113.0px;height:4.0px;background:#353535"></div><div class="abs" style="left:674.6px;top:262.18px;font-size:11.6px;line-height:1;font-weight:normal;color:#e3e3e3;white-space:nowrap;">Vector.ZAxis</div><div class="abs" style="left:711.0px;top:288.3px;width:45.0px;height:19.4px;border:1px solid #8c8c8c;border-right:none;border-radius:9px 0 0 9px"></div><div class="abs" style="left:719.9px;top:294.07px;font-size:8.3px;line-height:1;font-weight:bold;color:#e8e8e8;white-space:nowrap;">Vector</div><div class="abs" style="left:717.0px;top:318.97px;font-size:6.3px;line-height:1;font-weight:bold;color:#f0f0f0;white-space:nowrap;">AUTO</div><div class="abs" style="left:746.0px;top:317.0px;width:2.0px;height:2.0px;background:#d0d0d0"></div><div class="abs" style="left:746.0px;top:321.0px;width:2.0px;height:2.0px;background:#d0d0d0"></div><div class="abs" style="left:746.0px;top:325.0px;width:2.0px;height:2.0px;background:#d0d0d0"></div><div class="abs" style="left:13.0px;top:198.0px;width:324.0px;height:78.0px;background:#3c3c3c;border-radius:5px 5px 0 0"></div><div class="abs" style="left:13.0px;top:198.0px;width:324.0px;height:31.0px;background:#535353;border-radius:5px 5px 0 0"></div><div class="abs" style="left:13.0px;top:229.0px;width:324.0px;height:4.0px;background:#353535"></div><div class="abs" style="left:45.5px;top:207.78px;font-size:11.6px;line-height:1;font-weight:normal;color:#e3e3e3;white-space:nowrap;">Family Types</div><div class="abs" style="left:13.0px;top:234.0px;width:254.0px;height:20.0px;background:#5f5f5f"></div><div class="abs" style="left:19.7px;top:238.92px;font-size:11.44px;line-height:1;font-weight:normal;color:#dedede;white-space:nowrap;">V_Round_M&amp;E_Wall_Penetration:Mechanical</div><div class="abs" style="left:271.0px;top:234.0px;width:66.0px;height:20.0px;border:1px solid #8c8c8c;border-right:none;border-radius:9px 0 0 9px"></div><div class="abs" style="left:280.5px;top:240.07px;font-size:8.3px;line-height:1;font-weight:bold;color:#e8e8e8;white-space:nowrap;">Family Type</div><div class="abs" style="left:327.0px;top:262.0px;width:2.0px;height:2.0px;background:#d0d0d0"></div><div class="abs" style="left:327.0px;top:266.0px;width:2.0px;height:2.0px;background:#d0d0d0"></div><div class="abs" style="left:327.0px;top:270.0px;width:2.0px;height:2.0px;background:#d0d0d0"></div><div class="abs" style="left:68.0px;top:325.0px;width:153.0px;height:91.0px;background:#3c3c3c;border-radius:5px 5px 0 0"></div><div class="abs" style="left:68.0px;top:325.0px;width:153.0px;height:31.0px;background:#535353;border-radius:5px 5px 0 0"></div><div class="abs" style="left:99.7px;top:334.38px;font-size:11.6px;line-height:1;font-weight:normal;color:#e3e3e3;white-space:nowrap;">Select Point on Face</div><div class="abs" style="left:74.2px;top:361.3px;width:99.5px;height:16.4px;border:1px solid #6c6c6c"></div><div class="abs" style="left:74.2px;top:361.3px;width:99.49999999999999px;height:16.399999999999977px;font-size:8.3px;line-height:16.399999999999977px;text-align:center;font-weight:bold;color:#f2f2f2">Select</div><div class="abs" style="left:181.5px;top:361.0px;width:39.5px;height:19.0px;border:1px solid #8c8c8c;border-right:none;border-radius:9px 0 0 9px"></div><div class="abs" style="left:190.2px;top:366.57px;font-size:8.3px;line-height:1;font-weight:bold;color:#e8e8e8;white-space:nowrap;">Point</div><div class="abs" style="left:75.4px;top:383.07px;font-size:7.95px;line-height:1;font-weight:bold;color:#f0f0f0;white-space:nowrap;">Point on Element : 211551</div><div class="abs" style="left:212.0px;top:402.0px;width:2.0px;height:2.0px;background:#d0d0d0"></div><div class="abs" style="left:212.0px;top:406.0px;width:2.0px;height:2.0px;background:#d0d0d0"></div><div class="abs" style="left:212.0px;top:410.0px;width:2.0px;height:2.0px;background:#d0d0d0"></div><div class="abs" style="left:318.0px;top:302.0px;width:193.0px;height:99.0px;background:#3c3c3c;border-radius:5px 5px 0 0"></div><div class="abs" style="left:318.0px;top:302.0px;width:193.0px;height:31.0px;background:#535353;border-radius:5px 5px 0 0"></div><div class="abs" style="left:318.0px;top:333.0px;width:193.0px;height:4.0px;background:#353535"></div><div class="abs" style="left:350.0px;top:312.38px;font-size:11.6px;line-height:1;font-weight:normal;color:#e3e3e3;white-space:nowrap;">FamilyInstance.ByPoint</div><div class="abs" style="left:318.0px;top:338.0px;width:106.0px;height:20.0px;border:1px solid #8c8c8c;border-left:none;border-radius:0 9px 9px 0"></div><div class="abs" style="left:318.0px;top:338.0px;width:3.0px;height:20.0px;background:#5bb4e4"></div><div class="abs" style="left:325.7px;top:343.99px;font-size:8.4px;line-height:1;font-weight:bold;color:#e8e8e8;white-space:nowrap;">familyType</div><div class="abs" style="left:415.0px;top:344.12px;font-size:8.6px;line-height:1;font-weight:bold;color:#e8e8e8;white-space:nowrap;">&gt;</div><div class="abs" style="left:318.0px;top:361.5px;width:106.0px;height:19.5px;border:1px solid #8c8c8c;border-left:none;border-radius:0 9px 9px 0"></div><div class="abs" style="left:318.0px;top:361.5px;width:3.0px;height:19.5px;background:#5bb4e4"></div><div class="abs" style="left:325.7px;top:367.24px;font-size:8.4px;line-height:1;font-weight:bold;color:#e8e8e8;white-space:nowrap;">point</div><div class="abs" style="left:415.0px;top:367.37px;font-size:8.6px;line-height:1;font-weight:bold;color:#e8e8e8;white-space:nowrap;">&gt;</div><div class="abs" style="left:432.0px;top:338.0px;width:79.0px;height:20.0px;border:1px solid #8c8c8c;border-right:none;border-radius:9px 0 0 9px"></div><div class="abs" style="left:441.4px;top:344.07px;font-size:8.3px;line-height:1;font-weight:bold;color:#e8e8e8;white-space:nowrap;">FamilyInstance</div><div class="abs" style="left:472.3px;top:389.87px;font-size:6.3px;line-height:1;font-weight:bold;color:#f0f0f0;white-space:nowrap;">AUTO</div><div class="abs" style="left:502.0px;top:388.0px;width:2.0px;height:2.0px;background:#d0d0d0"></div><div class="abs" style="left:502.0px;top:392.0px;width:2.0px;height:2.0px;background:#d0d0d0"></div><div class="abs" style="left:502.0px;top:396.0px;width:2.0px;height:2.0px;background:#d0d0d0"></div><div class="abs" style="left:795.0px;top:297.0px;width:214.0px;height:104.0px;border:3px solid #5cb6e4;border-radius:7px 7px 0 0"></div><div class="abs" style="left:798.0px;top:300.0px;width:208.0px;height:98.0px;background:#3c3c3c;border-radius:5px 5px 0 0"></div><div class="abs" style="left:798.0px;top:300.0px;width:208.0px;height:31.0px;background:#535353;border-radius:5px 5px 0 0"></div><div class="abs" style="left:798.0px;top:331.0px;width:208.0px;height:4.0px;background:#353535"></div><div class="abs" style="left:829.8px;top:309.38px;font-size:11.6px;line-height:1;font-weight:normal;color:#e3e3e3;white-space:nowrap;">FamilyInstance.SetRotation</div><div class="abs" style="left:798.0px;top:336.0px;width:121.0px;height:20.0px;border:1px solid #8c8c8c;border-left:none;border-radius:0 9px 9px 0"></div><div class="abs" style="left:798.0px;top:336.0px;width:3.0px;height:20.0px;background:#5bb4e4"></div><div class="abs" style="left:805.4px;top:341.99px;font-size:8.4px;line-height:1;font-weight:bold;color:#e8e8e8;white-space:nowrap;">familyInstance</div><div class="abs" style="left:910.0px;top:342.12px;font-size:8.6px;line-height:1;font-weight:bold;color:#e8e8e8;white-space:nowrap;">&gt;</div><div class="abs" style="left:798.0px;top:359.4px;width:121.0px;height:19.6px;border:1px solid #8c8c8c;border-left:none;border-radius:0 9px 9px 0"></div><div class="abs" style="left:798.0px;top:359.4px;width:3.0px;height:19.6px;background:#5bb4e4"></div><div class="abs" style="left:805.4px;top:365.19px;font-size:8.4px;line-height:1;font-weight:bold;color:#e8e8e8;white-space:nowrap;">degree</div><div class="abs" style="left:910.0px;top:365.32px;font-size:8.6px;line-height:1;font-weight:bold;color:#e8e8e8;white-space:nowrap;">&gt;</div><div class="abs" style="left:928.0px;top:336.0px;width:78.0px;height:20.0px;border:1px solid #8c8c8c;border-right:none;border-radius:9px 0 0 9px"></div><div class="abs" style="left:936.6px;top:342.07px;font-size:8.3px;line-height:1;font-weight:bold;color:#e8e8e8;white-space:nowrap;">FamilyInstance</div><div class="abs" style="left:967.6px;top:387.87px;font-size:6.3px;line-height:1;font-weight:bold;color:#f0f0f0;white-space:nowrap;">AUTO</div><div class="abs" style="left:997.0px;top:386.0px;width:2.0px;height:2.0px;background:#d0d0d0"></div><div class="abs" style="left:997.0px;top:390.0px;width:2.0px;height:2.0px;background:#d0d0d0"></div><div class="abs" style="left:997.0px;top:394.0px;width:2.0px;height:2.0px;background:#d0d0d0"></div>
<svg class="abs" style="left:0;top:0" width="1060" height="730"><g fill="#c9c9c9"><rect x="86.5" y="79" width="7" height="2"/><rect x="85" y="81.8" width="10" height="1.8"/><rect x="85" y="84.2" width="10" height="2"/></g><g fill="#555"><rect x="88" y="79" width="1" height="2"/><rect x="91" y="79" width="1" height="2"/><rect x="89.5" y="81.8" width="1" height="1.8"/><rect x="87" y="84.2" width="1" height="2"/><rect x="92" y="84.2" width="1" height="2"/></g><path d="M94.2 87.8V96L96.4 94L98.5 97L99.8 96.2L97.8 93.2H100.8Z" fill="#e05252" stroke="#2a2a2a" stroke-width="0.6"/><path d="M317 101.8C314.5 97.5 311.8 94.5 311.8 91.8A5.2 5.2 0 0 1 322.2 91.8C322.2 94.5 319.5 97.5 317 101.8Z" fill="#eaa56a"/><circle cx="317" cy="91.6" r="2" fill="#535353"/><path d="M514.3 98.3L530 82.8" stroke="#4a9be8" stroke-width="1.6" stroke-linecap="round"/><path d="M517.5 95L524.5 88" stroke="#f2f2f2" stroke-width="1.5"/><path d="M527.3 85.6L521.8 87.4L525.5 91.1Z" fill="#f2f2f2"/><path d="M692.2 85.5V96" stroke="#e8e8e8" stroke-width="1.6" stroke-linecap="round"/><path d="M692.2 96L701.5 90.5M692.2 96L701 99.2" stroke="#e04a4a" stroke-width="1.5"/><path d="M696.8 92.2A3 3 0 0 1 697.2 98" stroke="#eee" stroke-width="1.1" fill="none"/><path d="M482.3 200V209.2M482.3 209.2L475.6 215.5" stroke="#4a9be8" stroke-width="1.6" fill="none"/><path d="M480.3 201.8L482.3 199L484.3 201.8Z" fill="#4a9be8"/><path d="M482.3 209.2H491" stroke="#f0f0f0" stroke-width="1.6"/><path d="M489.5 207.2L492.5 209.2L489.5 211.2Z" fill="#f0f0f0"/><path d="M488.5 202.5L491.5 205.5M491.5 202.5L488.5 205.5" stroke="#bbb" stroke-width="0.9"/><path d="M657.3 260V269.2" stroke="#f0f0f0" stroke-width="1.4"/><path d="M655.5 261.8L657.3 259L659.1 261.8Z" fill="#f0f0f0"/><path d="M657.3 269.2H666M657.3 269.2L650.6 275.5" stroke="#4a9be8" stroke-width="1.6" fill="none"/><path d="M664.5 267.2L667.5 269.2L664.5 271.2Z" fill="#4a9be8"/><path d="M659.8 260H662.8L659.8 264H662.8" stroke="#bbb" stroke-width="0.9" fill="none"/><g fill="#e04848"><rect x="19.5" y="206.6" width="1.6" height="1.6"/><rect x="23" y="206.6" width="7" height="1.6"/><rect x="19.5" y="209.6" width="1.6" height="1.6"/><rect x="23" y="209.6" width="7" height="1.6"/></g><path d="M22.5 211.5V220.5H36" stroke="#d04545" stroke-width="1" stroke-dasharray="1.2 1.2" fill="none"/><g fill="none" stroke="#b9b9b9" stroke-width="1"><rect x="26" y="213.2" width="4" height="5.6"/><rect x="31.2" y="213.2" width="4.4" height="5.6"/></g><g fill="#777"><rect x="27" y="216" width="2" height="1.8"/><rect x="32.3" y="216" width="2.2" height="1.8"/></g><path d="M256.8 241.8L259.8 244.8L262.8 241.8" stroke="#e0e0e0" stroke-width="1.2" fill="none"/><path d="M74 335.5L81 332.5L91.5 335V347.5L80.5 348.5L74 345.5Z" fill="#dcdcdc"/><path d="M80.5 337L91.5 335V347.5L80.5 348.5Z" fill="#8c8c8c"/><path d="M74 335.5L80.5 337V348.5L74 345.5Z" fill="#e8e8e8"/><circle cx="83.3" cy="335" r="1.4" fill="#2f6fd0"/><path d="M84.8 339.3V347.5L86.8 345.8L88.4 348.4L89.8 347.6L88.4 345.2H91.6Z" fill="#e05252" stroke="#222" stroke-width="0.6"/><rect x="327.3" y="309.6" width="4.2" height="5" fill="none" stroke="#808080" stroke-width="0.8"/><rect x="333.5" y="309.3" width="7.3" height="5.6" fill="#3d8de0" stroke="#f0f0f0" stroke-width="0.9"/><g fill="#1b1b1b"><rect x="328.6" y="316.8" width="3.2" height="3.2"/><rect x="332.8" y="317.6" width="3.2" height="3.2"/><rect x="327" y="321.8" width="3.2" height="3.2"/><rect x="331.6" y="321.8" width="3.2" height="3.2"/></g><g fill="#e05050"><rect x="329.4" y="317.6" width="1.6" height="1.6"/><rect x="333.6" y="318.4" width="1.6" height="1.6"/><rect x="327.8" y="322.6" width="1.6" height="1.6"/><rect x="332.4" y="322.6" width="1.8" height="1.6"/></g><g fill="none" stroke="#8a8a8a" stroke-width="0.9"><rect x="337.3" y="317" width="3.6" height="3.8"/><rect x="337.3" y="322" width="3.6" height="3.8"/></g><rect x="807.2" y="307.3" width="3.6" height="5.4" fill="none" stroke="#808080" stroke-width="0.8"/><rect x="813.2" y="307.2" width="7.6" height="5.8" fill="#3d8de0" stroke="#f0f0f0" stroke-width="0.9"/><path d="M811.8 315.2A4 4 0 1 1 808 318.5" stroke="#e04a4a" stroke-width="1.2" fill="none"/><path d="M810.5 314L813 315.5L810.8 317Z" fill="#e04a4a"/><g fill="none" stroke="#8a8a8a" stroke-width="0.9"><rect x="817.3" y="314.8" width="3.6" height="3.6"/><rect x="817.3" y="319.8" width="3.6" height="3.6"/></g></svg>
<svg class="abs" style="left:0;top:0" width="1060" height="730"><defs><filter id="sh" x="-20%" y="-20%" width="140%" height="140%"><feDropShadow dx="0" dy="1" stdDeviation="1.2" flood-color="#000" flood-opacity="0.18"/></filter></defs><rect x="919.6" y="-6" width="131.7" height="24.3" rx="3" fill="#fff" filter="url(#sh)"/><rect x="985.3" y="0" width="0.8" height="18" fill="#e2e2e2"/><g stroke="#7e7e7e" stroke-width="1" fill="none"><circle cx="936.8" cy="4" r="6.8"/><path d="M936.4 5.7H955.5L946 -6Z"/><path d="M958.5 -2V9.5H970.5V-2M970.5 9.5L974.5 5.5V-2"/></g><g stroke="#45a2f5" stroke-width="1.6" fill="#d4dfe9"><rect x="997" y="-3" width="12.5" height="5.5" rx="1"/><rect x="1003.8" y="6.8" width="13.2" height="4.6" rx="1"/><rect x="1027.2" y="-1" width="16.2" height="8.4" rx="1"/></g><path d="M1009.5 0L1027 2.5M1017 8.5L1027 4" stroke="#7fc0f8" stroke-width="1.3" fill="none"/><rect x="1020.8" y="31.8" width="30.5" height="89.2" rx="3" fill="#fff" filter="url(#sh)"/><g stroke="#7a7a7a" stroke-width="2" fill="none"><path d="M1029 44V40H1033M1039 40H1043V44M1043 50V54H1039M1033 54H1029V50"/></g><path d="M1030 77H1042M1036 71V83" stroke="#7a7a7a" stroke-width="2.2"/><path d="M1030 106H1042" stroke="#7a7a7a" stroke-width="2.2"/><rect x="1020.8" y="130.6" width="30.5" height="30.2" rx="3" fill="#fff" filter="url(#sh)"/><g fill="#7a7a7a"><path d="M1036 137L1039.5 141H1032.5Z"/><path d="M1036 155L1039.5 151H1032.5Z"/><path d="M1027 146L1031 142.5V149.5Z"/><path d="M1045 146L1041 142.5V149.5Z"/></g><path d="M1036 140V152M1030 146H1042" stroke="#7a7a7a" stroke-width="1.8"/><rect x="1020.8" y="168" width="30.5" height="32.4" rx="3" fill="#fff" filter="url(#sh)"/><g stroke="#8a8a8a" stroke-width="1" fill="none"><path d="M1024.5 172V196.5H1049"/><path d="M1037.5 175L1045 178.5V187L1037.5 191L1030 187V178.5Z M1030 178.5L1037.5 182.5L1045 178.5M1037.5 182.5V191"/></g></svg><div class="abs" style="left:1033px;top:376px;width:27px;height:97px;background:#3a3a3a"></div><svg class="abs" style="left:1033px;top:376px" width="27" height="97"><path d="M19 17.5H8M12.5 13L8 17.5L12.5 22" stroke="#c4c4c4" stroke-width="2" fill="none"/></svg><div class="abs" style="left:1042px;top:433.8px;width:0;height:0"><div style="position:absolute;left:-30px;top:-9px;width:60px;height:18px;line-height:18px;text-align:center;font-size:15.5px;color:#a9a9a9;transform:rotate(-90deg)">Sidebar</div></div><svg class="abs" style="left:398px;top:214px" width="20" height="26"><path d="M3.5 3.5V20L7.5 16.2L10.6 23L13.2 21.8L10.2 15.2H15.5Z" fill="#111" stroke="#fff" stroke-width="1.2" stroke-linejoin="round"/></svg>
</div>
<div class="abs" style="left:0;top:729px;width:1060px;height:2px;background:#a9a9a9"></div>
<div class="abs" style="left:0;top:737px;width:34.5px;height:43.5px;background:#23a595;border-right:1px solid #5fd0c0;border-radius:0 2px 2px 0"></div><div class="abs" style="left:50px;top:745px;width:128px;height:31.5px;background:#4d4d4d;border:2px solid #9c9c9c;border-radius:5px"></div><div class="abs" style="left:59.7px;top:752px;font-size:15.4px;line-height:1;color:#dedede;white-space:nowrap">Run completed.</div><svg class="abs" style="left:0;top:0" width="1065" height="791"><rect x="1054" y="774" width="2" height="2" fill="#d8d8d8"/><rect x="1050" y="778" width="2" height="2" fill="#d8d8d8"/><rect x="1054" y="778" width="2" height="2" fill="#d8d8d8"/><rect x="1046" y="782" width="2" height="2" fill="#d8d8d8"/><rect x="1050" y="782" width="2" height="2" fill="#d8d8d8"/><rect x="1054" y="782" width="2" height="2" fill="#d8d8d8"/><rect x="1042" y="786" width="2" height="2" fill="#d8d8d8"/><rect x="1046" y="786" width="2" height="2" fill="#d8d8d8"/><rect x="1050" y="786" width="2" height="2" fill="#d8d8d8"/><rect x="1054" y="786" width="2" height="2" fill="#d8d8d8"/></svg>
</body></html>
